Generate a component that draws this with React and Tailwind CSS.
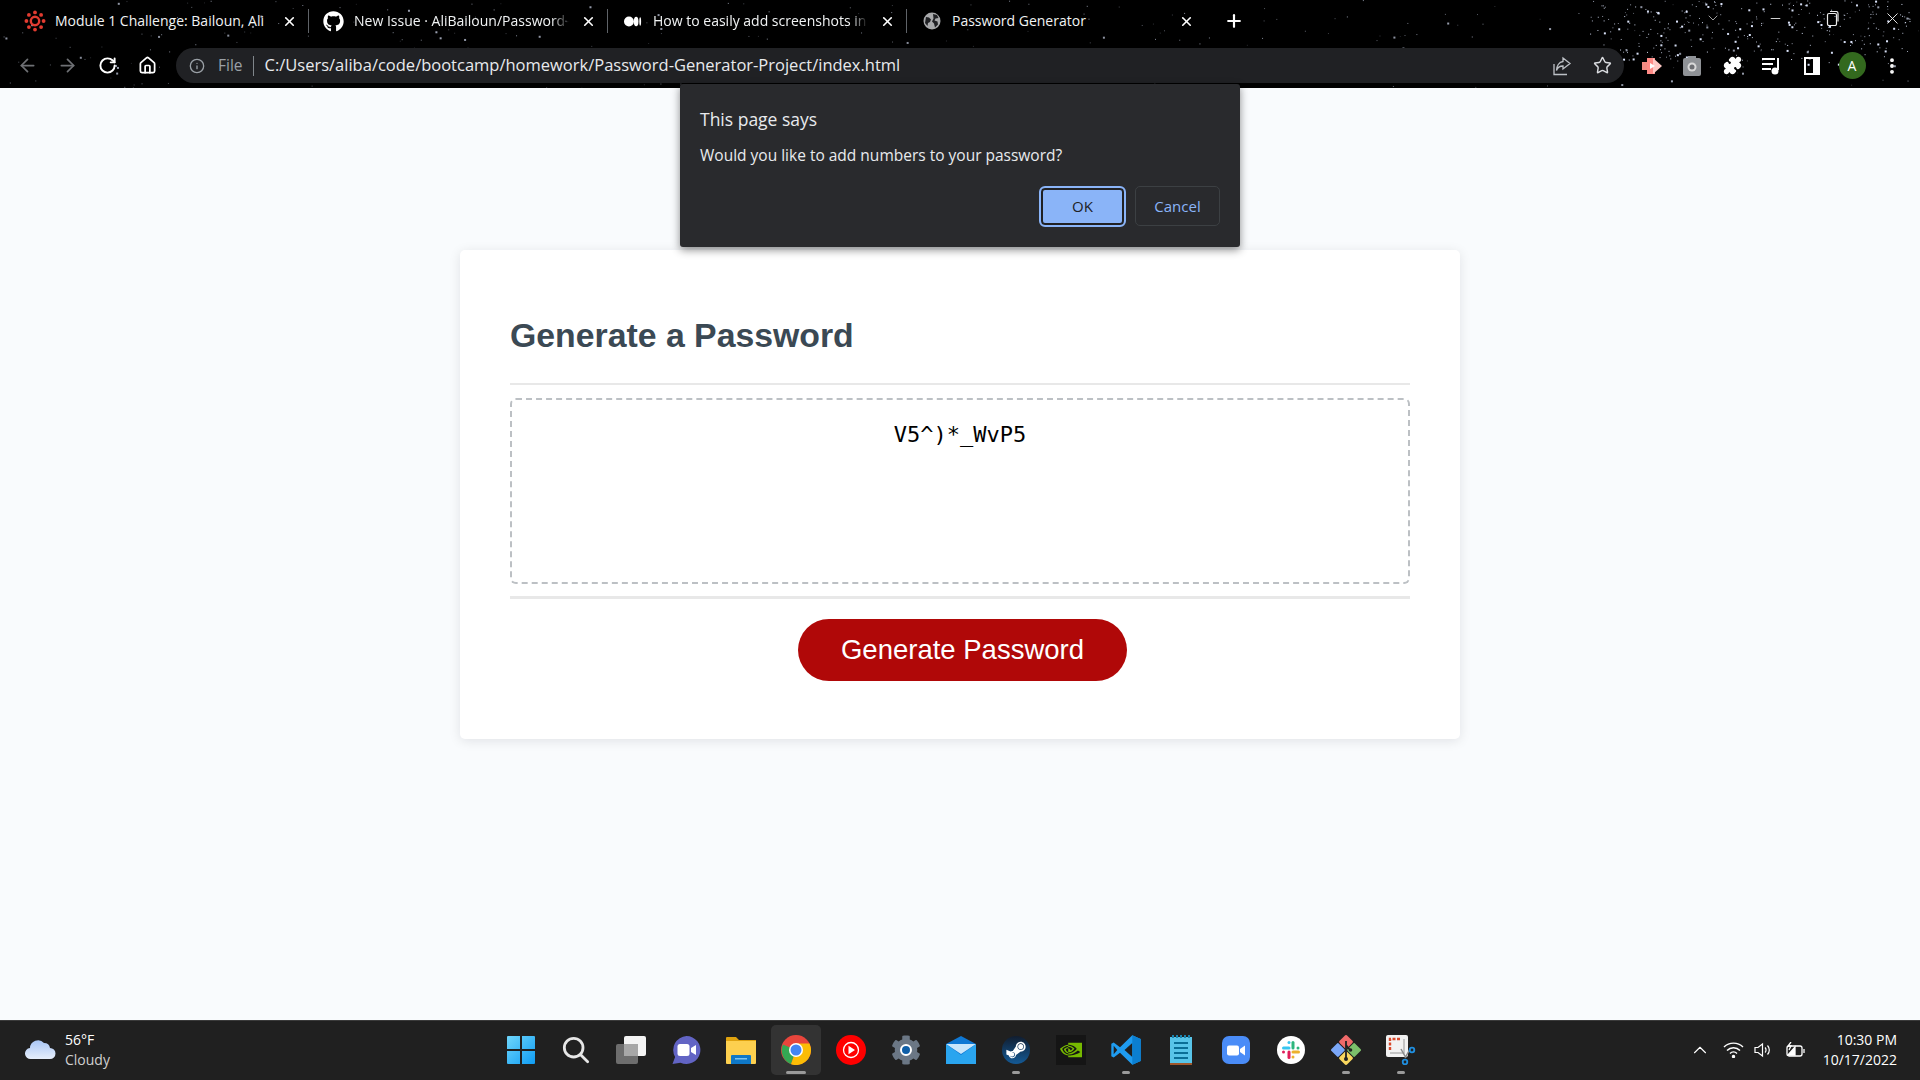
import { ArrowLeft, ArrowRight, RotateCw, Home, Info, Star, Puzzle, ChevronDown, ChevronUp, Minus, X, Plus, EllipsisVertical } from 'lucide-react';
import { FaGithub, FaSteamSymbol, FaCog } from 'react-icons/fa';
import { SiNvidia } from 'react-icons/si';

const uiFont = "font-['Open_Sans','Noto_Sans',sans-serif]";

// campo de estrelas do tema do navegador
function StarField() {
  let seed = 42;
  const rnd = () => {
    seed = (seed * 16807) % 2147483647;
    return seed / 2147483647;
  };
  const stars = [];
  for (let i = 0; i < 620; i++) {
    const cluster = i % 2 === 0;
    const x = cluster ? 1590 + rnd() * 320 : rnd() * 1920;
    const y = cluster ? rnd() * 64 : rnd() * 88;
    const bright = rnd();
    stars.push({ x, y, s: bright > 0.82 ? 2 : 1, o: cluster ? 0.55 + bright * 0.45 : 0.15 + bright * 0.55 });
  }
  return (
    <svg className="absolute inset-0" width="1920" height="88">
      {stars.map((st, i) => (
        <rect key={i} x={st.x} y={st.y} width={st.s} height={st.s} fill="#dfe8ff" opacity={st.o} />
      ))}
    </svg>
  );
}

function CanvasIcon() {
  const dots = [0, 45, 90, 135, 180, 225, 270, 315];
  return (
    <svg width="22" height="22" viewBox="0 0 22 22">
      <circle cx="11" cy="11" r="4.2" fill="none" stroke="#e23b30" strokeWidth="2.4" />
      {dots.map((a) => (
        <circle key={a} cx={11 + 8.6 * Math.cos((a * Math.PI) / 180)} cy={11 + 8.6 * Math.sin((a * Math.PI) / 180)} r="1.9" fill="#e23b30" />
      ))}
    </svg>
  );
}

function MediumIcon() {
  return (
    <svg width="18" height="11" viewBox="0 0 20 12">
      <ellipse cx="5.500" cy="6" rx="5.500" ry="5.500" fill="#fff" />
      <ellipse cx="13.500" cy="6" rx="2.600" ry="5.200" fill="#fff" />
      <ellipse cx="18" cy="6" rx="1" ry="4.600" fill="#fff" />
    </svg>
  );
}

function GlobeIcon() {
  return (
    <svg width="18" height="18" viewBox="0 0 18 18">
      <circle cx="9" cy="9" r="8.500" fill="#a8a9ab" />
      <path d="M3 5l3 .5 2 2-1 2.500-2 1-.5 3L2 11zM10 2l4 1 1.500 3-3 .5-1 2 3 1 .5 3-3 3-1-4-2-2 1.500-3z" fill="#202124" />
    </svg>
  );
}

function Tab({ icon, title, fade, sep = true }) {
  return (
    <div className="relative flex h-[42px] w-[299px] shrink-0 items-center">
      <div className="flex w-[45px] shrink-0 items-center justify-center pl-[4px]">{icon}</div>
      <div className={`w-[215px] overflow-hidden whitespace-nowrap pb-[1px] text-[14px] leading-[19px] text-[#f1f3f4] ${fade ? '[mask-image:linear-gradient(to_right,#000_92%,transparent)]' : ''}`}>
        {title}
      </div>
      <X size={15} strokeWidth={2.6} className="ml-[12px] text-white" />
      {sep && <div className="ml-auto h-[24px] w-px bg-[#5f6368]" />}
    </div>
  );
}

function BrowserFrame() {
  return (
    <header className="relative h-[88px] shrink-0 bg-black">
      <StarField />
      <div className="relative flex h-[42px] items-center pl-[10px]">
        <Tab icon={<CanvasIcon />} title="Module 1 Challenge: Bailoun, Ali" />
        <Tab icon={<FaGithub size={21} color="#fff" />} title="New Issue · AliBailoun/Password-" fade />
        <Tab icon={<MediumIcon />} title="How to easily add screenshots in" fade />
        <Tab icon={<GlobeIcon />} title="Password Generator" sep={false} />
        <Plus size={20} strokeWidth={2.6} className="ml-[18px] text-white" />
        <div className="ml-auto flex h-[36px] items-center self-start text-[#ededed]">
          <ChevronDown size={16} strokeWidth={1} className="mr-[47px]" />
          <Minus size={15} strokeWidth={1.4} className="mr-[43px]" />
          <svg width="13" height="15" viewBox="0 0 13 15" fill="none" stroke="#ededed" strokeWidth="1.200" className="mr-[44px]">
            <rect x="1.500" y="2.500" width="9" height="12" rx="1.500" />
            <path d="M4 .5h6a2 2 0 0 1 2 2v8" />
          </svg>
          <X size={19} strokeWidth={1.2} className="mr-[18px]" />
        </div>
      </div>
      <div className="relative mt-[6px] flex h-[35px] items-center pl-[7px]">
        <div className="flex h-[35px] w-[40px] items-center justify-center text-[#6e7074]"><ArrowLeft size={21} /></div>
        <div className="flex h-[35px] w-[40px] items-center justify-center text-[#6e7074]"><ArrowRight size={21} /></div>
        <div className="flex h-[35px] w-[41px] items-center justify-center text-white"><RotateCw size={19} strokeWidth={2.4} /></div>
        <div className="flex h-[35px] w-[39px] items-center justify-center text-white"><Home size={19} strokeWidth={2.2} /></div>
        <div className="ml-[9px] flex h-[35px] w-[1448px] items-center rounded-full bg-[#202124] pl-[13px] pr-[2px]">
          <Info size={16} className="text-[#9aa0a6]" />
          <span className="ml-[13px] text-[15.5px] text-[#9aa0a6]">File</span>
          <div className="ml-[10px] h-[20px] w-px bg-[#80868b]" />
          <span className="ml-[11px] text-[16.5px] text-[#e8eaed]">C:/Users/aliba/code/bootcamp/homework/Password-Generator-Project/index.html</span>
          <div className="ml-auto flex h-[35px] w-[40px] items-center justify-center">
            <svg width="20" height="20" viewBox="0 0 20 20" fill="none" stroke="#bdc1c6" strokeWidth="1.300">
              <path d="M2 8v10.500h13" />
              <path d="M11 2l7 5.500-7 5.500V10c-3.500 0-5.500 1.500-6.500 4.500C4.500 10 7 6 11 5.500z" />
            </svg>
          </div>
          <div className="flex h-[35px] w-[40px] items-center justify-center text-[#dadce0]"><Star size={19} strokeWidth={1.8} /></div>
        </div>
        <div className="ml-[8px] flex h-[35px] w-[40px] items-center justify-center">
          <svg width="20" height="20" viewBox="0 0 20 20">
            <rect x="0" y="6" width="5" height="8" fill="#f28b82" />
            <rect x="5" y="2" width="8" height="16" fill="#ff8a85" />
            <path d="M11 2l9 8-9 8z" fill="#ffc9c5" />
            <path d="M8 7l5 3-5 3z" fill="#fff" />
          </svg>
        </div>
        <div className="flex h-[35px] w-[40px] items-center justify-center">
          <svg width="20" height="22" viewBox="0 0 20 22">
            <path d="M6 1h8v3H6z" fill="#8f9296" />
            <rect x="1" y="3" width="18" height="18" rx="2" fill="#8f9296" />
            <circle cx="10" cy="12" r="4.500" fill="#d9d9d9" />
            <circle cx="10" cy="12" r="2.500" fill="#6d6f73" />
          </svg>
        </div>
        <div className="flex h-[35px] w-[40px] items-center justify-center text-white"><Puzzle size={19} fill="#fff" /></div>
        <div className="flex h-[35px] w-[40px] items-center justify-center">
          <svg width="20" height="18" viewBox="0 0 20 18" fill="none" stroke="#fff" strokeWidth="2">
            <path d="M0 2h13M0 7h11M0 12h9" />
            <path d="M16 1v12" />
            <circle cx="13" cy="14" r="2.500" fill="#fff" />
          </svg>
        </div>
        <div className="flex h-[35px] w-[40px] items-center justify-center">
          <div className="flex h-[18px] w-[16px] justify-end border-2 border-white"><div className="h-full w-[5px] bg-white" /></div>
        </div>
        <div className="flex h-[35px] w-[40px] items-center justify-center">
          <div className="flex h-[27px] w-[27px] items-center justify-center rounded-full bg-[#33691e] text-[14px] text-white">A</div>
        </div>
        <div className="flex h-[35px] w-[40px] items-center justify-center text-white"><EllipsisVertical size={20} strokeWidth={2.6} /></div>
      </div>
    </header>
  );
}

function AlertDialog() {
  return (
    <div className="absolute left-[680px] top-[84px] h-[163px] w-[560px] rounded-[3px] bg-[#292a2d] px-[20px] pt-[24px] text-[#e8eaed] shadow-[0_3px_8px_rgba(0,0,0,0.45)]">
      <div className="text-[17.5px] leading-[22px]">This page says</div>
      <div className="mt-[15px] text-[15.5px] leading-[20px]">Would you like to add numbers to your password?</div>
      <div className="mt-[21px] flex items-center justify-end gap-[11px]">
        <button className="h-[37px] w-[83px] rounded-[4px] bg-[#8ab4f8] text-[15px] font-medium text-[#202124] outline-2 outline-offset-0 outline-[#8ab4f8] ring-2 ring-inset ring-[#202124]">OK</button>
        <button className="h-[40px] w-[85px] rounded-[5px] border border-[#3c4043] text-[15px] font-medium text-[#8ab4f8]">Cancel</button>
      </div>
    </div>
  );
}

function PasswordCard() {
  return (
    <main className="flex-1 bg-[#f9fbfd]">
      <section className="mx-auto mt-[162px] h-[489px] w-[1000px] rounded-[5px] bg-white px-[50px] shadow-[0_2px_12px_rgba(0,5,25,0.1)] font-['Liberation_Sans',sans-serif]">
        <div className="border-b-2 border-[#e8e8e8] pb-[27px] pt-[64px]">
          <h2 className="text-[33.8px] font-bold leading-[42px] text-[#3b4954]">Generate a Password</h2>
        </div>
        <div className="mt-[13px] h-[186px] rounded-[6px] border-2 border-dashed border-[#bcc0c4] pt-[20px] text-center font-['DejaVu_Sans_Mono',monospace] text-[22px] leading-[30px] text-black">
          V5^)*_WvP5
        </div>
        <div className="mt-[12px] h-[3px] bg-[#e8e8e8]" />
        <div className="mt-[20px] flex justify-center pl-[5px]">
          <button className="h-[62px] w-[329px] rounded-[31px] bg-[#b00808] text-[27.5px] text-white">Generate Password</button>
        </div>
      </section>
    </main>
  );
}

function TaskIcon({ children, dot, active }) {
  return (
    <div className="relative flex h-[50px] w-[55px] items-center justify-center">
      {active && <div className="absolute inset-y-0 left-[2px] right-[3px] rounded-[5px] bg-[#333333]" />}
      <div className="relative flex items-center justify-center">{children}</div>
      {dot && <div className={`absolute bottom-[1px] left-1/2 h-[3px] -translate-x-1/2 rounded-full bg-[#9a9a9a] ${active ? 'w-[20px]' : 'w-[8px]'}`} />}
    </div>
  );
}

function Taskbar() {
  return (
    <footer className="grid h-[60px] shrink-0 grid-cols-[1fr_auto_1fr] items-center border-t border-[#3a3a3a] bg-[#202020] pb-[2px] text-white">
      <div className="flex items-center pl-[25px]">
        <svg width="31" height="21" viewBox="0 0 31 21">
          <defs>
            <linearGradient id="nuvem" x1="0" y1="0" x2="0" y2="1">
              <stop offset="0" stopColor="#a9c6f5" />
              <stop offset="1" stopColor="#e6eefb" />
            </linearGradient>
          </defs>
          <path d="M6 20a5.500 5.500 0 0 1-1-11 8 8 0 0 1 14-5 6 6 0 0 1 6 5 5.500 5.500 0 0 1 0 11z" fill="url(#nuvem)" />
        </svg>
        <div className="ml-[9px] text-[14px] leading-[20px]">
          <div>56°F</div>
          <div className="text-[#cfcfcf]">Cloudy</div>
        </div>
      </div>

      <div className="flex items-center pl-[2px]">
        <TaskIcon>
          <svg width="30" height="30" viewBox="0 0 30 30">
            <defs>
              <linearGradient id="win" x1="0" y1="0" x2="1" y2="1">
                <stop offset="0" stopColor="#6fd6fb" />
                <stop offset="1" stopColor="#0f9cf3" />
              </linearGradient>
            </defs>
            <path d="M1 2a1 1 0 0 1 1-1h12v13H1zM16 1h12a1 1 0 0 1 1 1v12H16zM1 16h13v13H2a1 1 0 0 1-1-1zM16 16h13v12a1 1 0 0 1-1 1H16z" fill="url(#win)" />
          </svg>
        </TaskIcon>
        <TaskIcon>
          <svg width="28" height="28" viewBox="0 0 30 30" fill="none" stroke="#e6e6e6" strokeWidth="3">
            <circle cx="12.500" cy="12.500" r="10" />
            <path d="M20 20l7.500 7.500" strokeLinecap="round" />
          </svg>
        </TaskIcon>
        <TaskIcon>
          <svg width="30" height="28" viewBox="0 0 30 28">
            <rect x="8" y="0" width="22" height="20" rx="2" fill="#f4f4f4" />
            <rect x="0" y="8" width="22" height="20" rx="2" fill="#6d6d6d" />
            <rect x="8" y="8" width="14" height="12" fill="#a7a7a7" />
          </svg>
        </TaskIcon>
        <TaskIcon>
          <svg width="30" height="30" viewBox="0 0 30 30">
            <path d="M15.500 1a14 14 0 1 1-6 26.700L1.500 29l2.600-7A14 14 0 0 1 15.500 1z" fill="#6264c4" />
            <rect x="6.500" y="9" width="12" height="12" rx="2.500" fill="#fff" />
            <path d="M20 13l5-3v10l-5-3z" fill="#fff" />
          </svg>
        </TaskIcon>
        <TaskIcon>
          <svg width="30" height="28" viewBox="0 0 30 28">
            <path d="M0 2a1 1 0 0 1 1-1h9l3 3h17v5H0z" fill="#e0a30f" />
            <path d="M0 5h30v22a1 1 0 0 1-1 1H1a1 1 0 0 1-1-1z" fill="#fdd04f" />
            <path d="M5 20a1 1 0 0 1 1-1h18a1 1 0 0 1 1 1v8H5z" fill="#0f78c8" />
            <rect x="9" y="22" width="12" height="1.500" fill="#7cc4f2" />
          </svg>
        </TaskIcon>
        <TaskIcon dot active>
          <svg width="30" height="30" viewBox="0 0 30 30">
            <circle cx="15" cy="15" r="15" fill="#e8453c" />
            <path d="M15 15L1.900 9.500A15 15 0 0 0 10 29.200z" fill="#34a853" />
            <path d="M15 15l-5 14.200A15 15 0 0 0 29.800 12.500L28.500 8.500H15z" fill="#fbbc05" />
            <circle cx="15" cy="15" r="7" fill="#fff" />
            <circle cx="15" cy="15" r="5.500" fill="#4285f4" />
          </svg>
        </TaskIcon>
        <TaskIcon>
          <svg width="30" height="30" viewBox="0 0 30 30">
            <circle cx="15" cy="15" r="15" fill="#ff0000" />
            <circle cx="15" cy="15" r="7.500" fill="none" stroke="#fff" strokeWidth="1.300" />
            <path d="M12.500 10.800l6.500 4.200-6.500 4.200z" fill="#fff" />
          </svg>
        </TaskIcon>
        <TaskIcon>
          <div className="relative flex h-[30px] w-[30px] items-center justify-center">
            <FaCog size={30} color="#6b7785" />
            <div className="absolute h-[12px] w-[12px] rounded-full border-2 border-white bg-[#0f5fa8]" />
          </div>
        </TaskIcon>
        <TaskIcon>
          <svg width="30" height="28" viewBox="0 0 30 28">
            <path d="M0 8L15 0l15 8v20H0z" fill="#0f78d4" />
            <path d="M0 8h30L15 18z" fill="#c9e6fb" />
            <path d="M0 8v20h30V8L15 19z" fill="#2aa5ef" />
          </svg>
        </TaskIcon>
        <TaskIcon dot>
          <div className="flex h-[28px] w-[28px] items-center justify-center rounded-full bg-[linear-gradient(#111d2f,#145a96)]">
            <FaSteamSymbol size={22} color="#fff" />
          </div>
        </TaskIcon>
        <TaskIcon>
          <div className="flex h-[30px] w-[30px] items-center justify-center bg-[#151515]">
            <SiNvidia size={22} color="#76b900" />
          </div>
        </TaskIcon>
        <TaskIcon dot>
          <svg width="30" height="30" viewBox="0 0 100 100">
            <path d="M71 99L30 59 9 75 1 71V29l8-4 21 16L71 1l28 12v74z" fill="#1f9cf0" />
            <path d="M71 27L45 50l26 23z" fill="#202020" />
            <path d="M9 36v28l12-14z" fill="#202020" />
            <path d="M71 1l28 12v74L71 99z" fill="#0b7fd1" />
          </svg>
        </TaskIcon>
        <TaskIcon>
          <svg width="22" height="30" viewBox="0 0 22 30">
            <rect x="0" y="2" width="22" height="26" fill="#58c4e8" />
            <rect x="0" y="28" width="22" height="2" fill="#a0562a" />
            <path d="M4 8h14M4 13h14M4 18h14M4 23h14" stroke="#0a6e96" strokeWidth="1.800" />
            <path d="M2 0h2v3H2zM6 0h2v3H6zM10 0h2v3h-2zM14 0h2v3h-2zM18 0h2v3h-2z" fill="#1a83ad" />
          </svg>
        </TaskIcon>
        <TaskIcon>
          <svg width="28" height="28" viewBox="0 0 28 28">
            <rect width="28" height="28" rx="7" fill="#4a8cf7" />
            <rect x="5" y="9.500" width="12" height="10" rx="2" fill="#fff" />
            <path d="M18 13l5-3.500v10L18 16z" fill="#fff" />
          </svg>
        </TaskIcon>
        <TaskIcon>
          <svg width="28" height="28" viewBox="0 0 28 28">
            <circle cx="14" cy="14" r="14" fill="#fff" />
            <rect x="5" y="10.500" width="8.500" height="3" rx="1.500" fill="#36c5f0" />
            <rect x="10.500" y="5" width="3" height="3" rx="1.500" fill="#36c5f0" />
            <rect x="14.500" y="5" width="3" height="8.500" rx="1.500" fill="#2eb67d" />
            <rect x="19.500" y="10.500" width="3" height="3" rx="1.500" fill="#2eb67d" />
            <rect x="14.500" y="14.500" width="8.500" height="3" rx="1.500" fill="#ecb22e" />
            <rect x="14.500" y="19.500" width="3" height="3" rx="1.500" fill="#ecb22e" />
            <rect x="10.500" y="14.500" width="3" height="8.500" rx="1.500" fill="#e01e5a" />
            <rect x="5" y="14.500" width="3" height="3" rx="1.500" fill="#e01e5a" />
          </svg>
        </TaskIcon>
        <TaskIcon dot>
          <svg width="30" height="30" viewBox="0 0 30 30">
            <g transform="rotate(45 15 15)">
              <rect x="4" y="4" width="10.500" height="10.500" rx="1.500" fill="#f06a6a" />
              <rect x="15.500" y="4" width="10.500" height="10.500" rx="1.500" fill="#7cc06b" />
              <rect x="4" y="15.500" width="10.500" height="10.500" rx="1.500" fill="#7ba7f7" />
              <rect x="15.500" y="15.500" width="10.500" height="10.500" rx="1.500" fill="#f9d75e" />
            </g>
            <path d="M15 6v18M15 10l4 5" stroke="#222" strokeWidth="1.800" fill="none" />
            <circle cx="15" cy="24" r="2" fill="#222" />
            <circle cx="19.500" cy="15" r="1.800" fill="#222" />
          </svg>
        </TaskIcon>
        <TaskIcon dot>
          <svg width="30" height="30" viewBox="0 0 30 30">
            <rect x="0" y="0" width="22" height="22" rx="2" fill="#f2f2f2" />
            <path d="M14 4H4v11" fill="none" stroke="#d9482b" strokeWidth="2.400" strokeDasharray="3 1.500" />
            <path d="M18 4v14H4" fill="none" stroke="#b5b5b5" strokeWidth="1.500" />
            <path d="M15 14l5 9M24 14l-5 9" stroke="#8a8a8a" strokeWidth="1.500" />
            <circle cx="26" cy="15" r="2.300" fill="none" stroke="#1f8fe0" strokeWidth="1.800" />
            <circle cx="19" cy="27" r="2.300" fill="none" stroke="#1f8fe0" strokeWidth="1.800" />
          </svg>
        </TaskIcon>
      </div>

      <div className="flex items-center justify-end pr-[23px]">
        <ChevronUp size={22} strokeWidth={1.2} className="mr-[12px]" />
        <svg width="21" height="16" viewBox="0 0 21 16" fill="none" stroke="#fff" strokeWidth="1.400" className="mr-[10px]">
          <path d="M1 5a13.500 13.500 0 0 1 19 0M4 8.500a9 9 0 0 1 13 0M7 11.500a5 5 0 0 1 7 0" />
          <circle cx="10.500" cy="14.500" r="1" fill="#fff" />
        </svg>
        <svg width="19" height="16" viewBox="0 0 19 16" fill="none" stroke="#fff" strokeWidth="1.200" className="mr-[13px]">
          <path d="M1 5.500h3L8.500 2v12L4 10.500H1z" />
          <path d="M11 5.500a3.500 3.500 0 0 1 0 5M13.500 3.500a6.500 6.500 0 0 1 0 9" />
        </svg>
        <svg width="20" height="16" viewBox="0 0 20 16" fill="none" stroke="#fff" strokeWidth="1.300" className="mr-[17px]">
          <rect x="1" y="4" width="15" height="10" rx="2" />
          <path d="M18 7v4" />
          <path d="M2 13l7-8v8z" fill="#fff" />
          <path d="M5 0L2 4h3L3 8" />
        </svg>
        <div className="text-right text-[14px] leading-[20px]">
          <div>10:30 PM</div>
          <div>10/17/2022</div>
        </div>
      </div>
    </footer>
  );
}

export default function App() {
  return (
    <div className={`relative flex h-screen flex-col overflow-hidden ${uiFont}`}>
      <BrowserFrame />
      <PasswordCard />
      <Taskbar />
      <AlertDialog />
    </div>
  );
}
